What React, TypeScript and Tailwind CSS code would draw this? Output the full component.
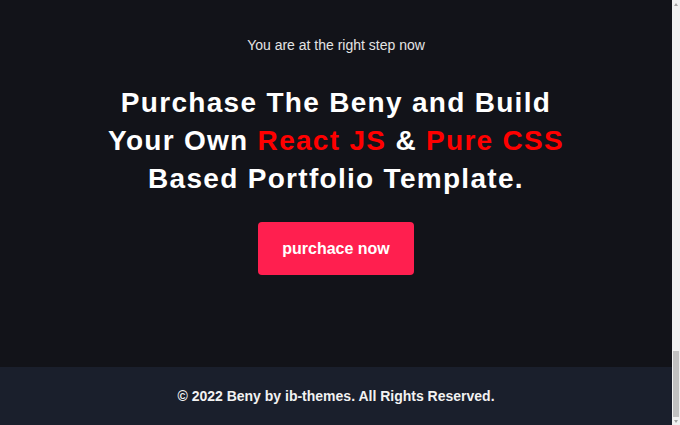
import React from 'react';

/**
 * Call-to-action block at the end of the portfolio page, followed by the footer.
 * The view shows the end of a long page, so the column is bottom-aligned and
 * the browser's scrollbar is drawn beside it.
 */
const PurchaseSection: React.FC = () => {
  return (
    <section className="flex flex-col items-center bg-[#121319] pt-[35px] pb-[92px] text-center">
      <p className="text-[14px] leading-[20px] text-[#e4e4e4]">You are at the right step now</p>
      <h2 className="mt-[29px] text-[28px] font-bold leading-[38px] tracking-[1.3px] text-white">
        Purchase The Beny and Build
        <br />
        Your Own <span className="text-[#ff0000]">React JS</span> &amp;{' '}
        <span className="text-[#ff0000]">Pure CSS</span>
        <br />
        Based Portfolio Template.
      </h2>
      <a
        href="#"
        className="mt-[24px] rounded-[4px] bg-[#ff1f4f] px-6 py-4 text-[16px] font-bold leading-[21px] text-white"
      >
        purchace now
      </a>
    </section>
  );
};

const Footer: React.FC = () => {
  return (
    <footer className="bg-[#1a1f2c] py-[19px] text-center">
      <p className="text-[14px] font-bold leading-[20px] text-[#f2f2f2]">
        © 2022 Beny by ib-themes. All Rights Reserved.
      </p>
    </footer>
  );
};

/** Page scrollbar, scrolled to the bottom */
const Scrollbar: React.FC = () => {
  return (
    <div className="flex w-[8px] shrink-0 flex-col bg-[#f1f1f1]">
      <div className="flex h-[8px] items-center justify-center">
        <svg width="4" height="3" viewBox="0 0 4 3">
          <path d="M2 0L4 3H0z" fill="#a3a3a3" />
        </svg>
      </div>
      <div className="flex flex-1 flex-col justify-end px-px">
        <div className="h-[66px] bg-[#c1c1c1]" />
      </div>
      <div className="flex h-[8px] items-center justify-center">
        <svg width="4" height="3" viewBox="0 0 4 3">
          <path d="M0 0H4L2 3z" fill="#a3a3a3" />
        </svg>
      </div>
    </div>
  );
};

export default function App() {
  return (
    <div className="flex h-screen bg-[#121319] font-['Liberation_Sans',Arial,sans-serif]">
      <main className="flex min-w-0 flex-1 flex-col justify-end overflow-hidden">
        <PurchaseSection />
        <Footer />
      </main>
      <Scrollbar />
    </div>
  );
}
